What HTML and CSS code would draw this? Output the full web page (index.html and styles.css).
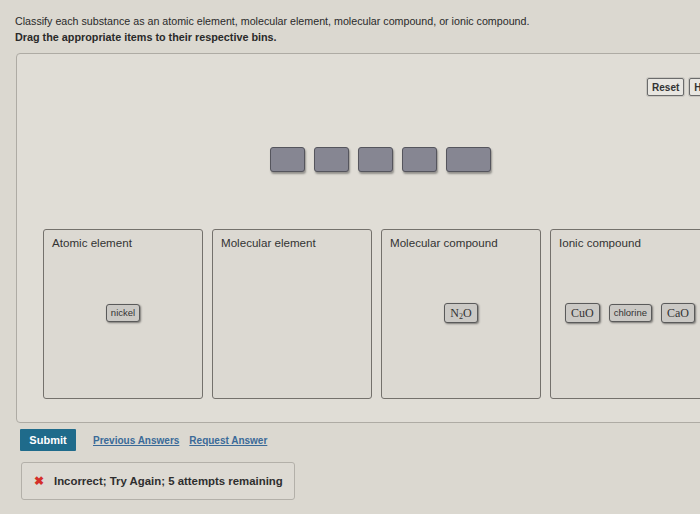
FILE: index.html
```html
<!DOCTYPE html>
<html>
<head>
<meta charset="utf-8">
<link rel="stylesheet" href="styles.css">
</head>
<body>
<div class="page">
  <div class="intro">
    <p class="q">Classify each substance as an atomic element, molecular element, molecular compound, or ionic compound.</p>
    <p class="instr">Drag the appropriate items to their respective bins.</p>
  </div>
  <div class="board">
    <div class="toolbar">
      <button class="tbtn">Reset</button>
      <button class="tbtn">Help</button>
    </div>
    <div class="pool">
      <span class="slot"></span>
      <span class="slot"></span>
      <span class="slot"></span>
      <span class="slot"></span>
      <span class="slot wide"></span>
    </div>
    <div class="bins">
      <div class="bin">
        <div class="bin-label">Atomic element</div>
        <div class="bin-items"><span class="item txt">nickel</span></div>
      </div>
      <div class="bin">
        <div class="bin-label">Molecular element</div>
        <div class="bin-items"></div>
      </div>
      <div class="bin">
        <div class="bin-label">Molecular compound</div>
        <div class="bin-items"><span class="item chem">N<sub>2</sub>O</span></div>
      </div>
      <div class="bin">
        <div class="bin-label">Ionic compound</div>
        <div class="bin-items">
          <span class="item chem">CuO</span>
          <span class="item txt">chlorine</span>
          <span class="item chem">CaO</span>
        </div>
      </div>
    </div>
  </div>
  <div class="actions">
    <button class="submit">Submit</button>
    <a class="link" href="#">Previous Answers</a>
    <a class="link" href="#">Request Answer</a>
  </div>
  <div class="feedback">
    <span class="xmark">&#10006;</span>
    <span class="fb-text">Incorrect; Try Again; 5 attempts remaining</span>
  </div>
</div>
</body>
</html>
```

FILE: styles.css
```css
html, body {
  margin: 0;
  padding: 0;
  width: 700px;
  height: 514px;
  overflow: hidden;
  background: #dbd8d0;
  font-family: "Liberation Sans", Arial, sans-serif;
  color: #2a2a2a;
}
.page {
  width: 760px;
  padding-top: 13px;
}
.intro {
  padding-left: 15px;
}
.intro p {
  margin: 0;
  line-height: 16px;
}
.q {
  font-size: 10.7px;
}
.instr {
  font-size: 10.8px;
  font-weight: bold;
}
.board {
  margin: 8px 0 0 16px;
  width: 728px;
  height: 370px;
  box-sizing: border-box;
  border: 1px solid #aeaba4;
  border-radius: 4px;
  background: #e0ddd6;
  padding: 24px 0 0 26px;
}
.toolbar {
  display: flex;
  justify-content: flex-end;
  gap: 5px;
  padding-right: 22px;
}
.tbtn {
  font-family: "Liberation Sans", Arial, sans-serif;
  font-size: 10px;
  font-weight: bold;
  color: #333;
  background: #e8e6e1;
  border: 1px solid #6b6b6b;
  border-radius: 2px;
  height: 18px;
  padding: 0 4px;
  box-shadow: 0 0 0 1px #c8c6c0;
}
.pool {
  display: flex;
  justify-content: center;
  gap: 9px;
  margin-top: 51px;
  padding-right: 26px;
}
.slot {
  display: block;
  width: 35px;
  height: 25px;
  box-sizing: border-box;
  background: #868692;
  border: 1px solid #55555d;
  border-radius: 3px;
  box-shadow: 1px 2px 2px rgba(0,0,0,0.35);
}
.slot.wide {
  width: 45px;
}
.bins {
  display: flex;
  gap: 9px;
  margin-top: 57px;
}
.bin {
  width: 160px;
  height: 170px;
  box-sizing: border-box;
  border: 1px solid #74716c;
  border-radius: 3px;
  background: #dcd9d2;
  display: flex;
  flex-direction: column;
}
.bin-label {
  font-size: 11.6px;
  color: #333;
  padding: 6px 0 0 8px;
  line-height: 14px;
}
.bin-items {
  flex: 1;
  display: flex;
  align-items: center;
  justify-content: center;
  gap: 9px;
  padding-bottom: 22px;
}
.item {
  display: inline-block;
  box-sizing: border-box;
  background: #cbc9c5;
  border: 1px solid #5a5a5a;
  border-radius: 3px;
  box-shadow: 1px 1px 2px rgba(0,0,0,0.45);
  color: #333;
  text-align: center;
}
.item.txt {
  font-family: "Liberation Sans", Arial, sans-serif;
  font-size: 9.5px;
  height: 18px;
  line-height: 16px;
  padding: 0 4px;
}
.item.chem {
  font-family: "Liberation Serif", "Times New Roman", serif;
  font-size: 12px;
  height: 20px;
  line-height: 18px;
  padding: 0 5px;
}
.item sub {
  font-size: 8px;
  vertical-align: -2px;
  line-height: 0;
}
.actions {
  display: flex;
  align-items: center;
  gap: 10px;
  margin: 6px 0 0 20px;
}
.submit {
  font-family: "Liberation Sans", Arial, sans-serif;
  font-size: 11px;
  font-weight: bold;
  color: #fff;
  background: #1f6b8b;
  border: none;
  border-radius: 1px;
  width: 56px;
  height: 22px;
  margin-right: 7px;
}
.link {
  font-size: 10px;
  font-weight: bold;
  color: #3a6a98;
  text-decoration: underline;
}
.feedback {
  margin: 11px 0 0 21px;
  width: 274px;
  height: 38px;
  box-sizing: border-box;
  border: 1px solid #b3b0a9;
  border-radius: 3px;
  background: #dddad3;
  display: flex;
  align-items: center;
  gap: 10px;
  padding-left: 12px;
}
.xmark {
  color: #d42f2a;
  font-size: 12px;
  font-weight: bold;
}
.fb-text {
  font-size: 11.4px;
  font-weight: bold;
  color: #2e2e2e;
}
```
